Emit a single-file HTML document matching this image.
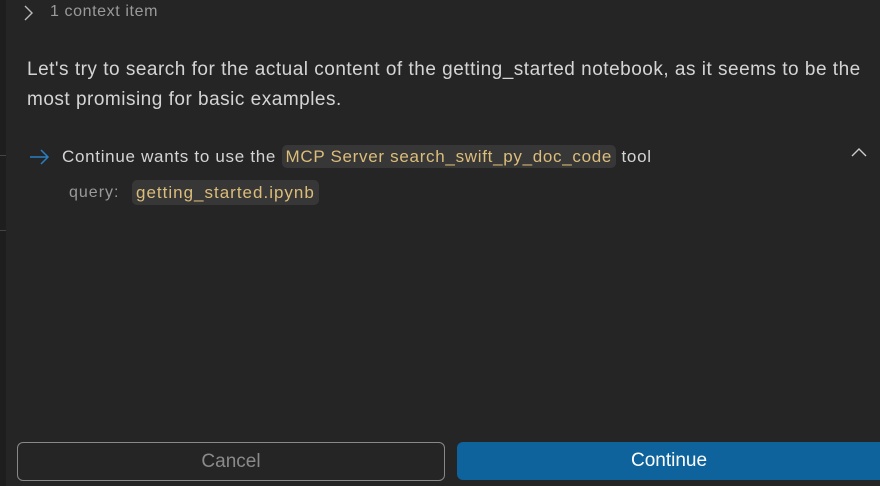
<!DOCTYPE html>
<html><head><style>
html,body{margin:0;padding:0;width:880px;height:486px;overflow:hidden;background:#252526;font-family:"Liberation Sans",sans-serif;position:relative}
.strip{position:absolute;left:0;top:0;width:6px;height:486px;background:#1e1e1e}
.sep{position:absolute;left:0;width:6px;height:1px;background:#444}
.t{position:absolute;white-space:nowrap}
.chip{background:#373737;border-radius:5px;color:#dcbd7a;padding:2px 4px}
</style></head><body>
<div class="strip"></div>
<div class="sep" style="top:155px"></div>
<div class="sep" style="top:230px"></div>
<svg class="t" style="left:22px;top:4px" width="12" height="18"><path d="M3 2 L10 9 L3 16" stroke="#bbb" stroke-width="1.4" fill="none"/></svg>
<div class="t" style="left:50px;top:3px;font-size:16px;color:#9a9a9a;letter-spacing:0.6px">1 context item</div>
<div class="t" style="left:27px;top:55px;font-size:19px;color:#d4d4d4;line-height:30px;letter-spacing:0.5px">Let's try to search for the actual content of the getting_started notebook, as it seems to be the<br>most promising for basic examples.</div>
<svg class="t" style="left:29px;top:148px" width="22" height="18"><path d="M1 9 H19 M12 2 L19 9 L12 16" stroke="#2a7fc2" stroke-width="1.5" fill="none"/></svg>
<div class="t" style="left:62px;top:145px;font-size:17px;color:#d4d4d4;line-height:24px;letter-spacing:0.7px">Continue wants to use the <span class="chip">MCP Server search_swift_py_doc_code</span> tool</div>
<svg class="t" style="left:850px;top:146px" width="18" height="12"><path d="M2 10 L9 3 L16 10" stroke="#ccc" stroke-width="1.4" fill="none"/></svg>
<div class="t" style="left:69px;top:181px;font-size:16px;color:#9a9a9a;line-height:24px;letter-spacing:1px">query:</div>
<div class="t" style="left:132px;top:181px;font-size:17px;line-height:24px;letter-spacing:1px"><span class="chip" style="padding:3px 4px">getting_started.ipynb</span></div>
<div class="t" style="left:17px;top:442px;width:426px;height:37px;border:1px solid #888;border-radius:6px;color:#8a8a8a;font-size:19px;text-align:center;line-height:37px">Cancel</div>
<div class="t" style="left:457px;top:442px;height:38px;background:#0e639c;border-radius:6px;color:#fff;font-size:19px;text-align:center;line-height:38px;width:430px"><span style="margin-right:6px">Continue</span></div>
</body></html>
